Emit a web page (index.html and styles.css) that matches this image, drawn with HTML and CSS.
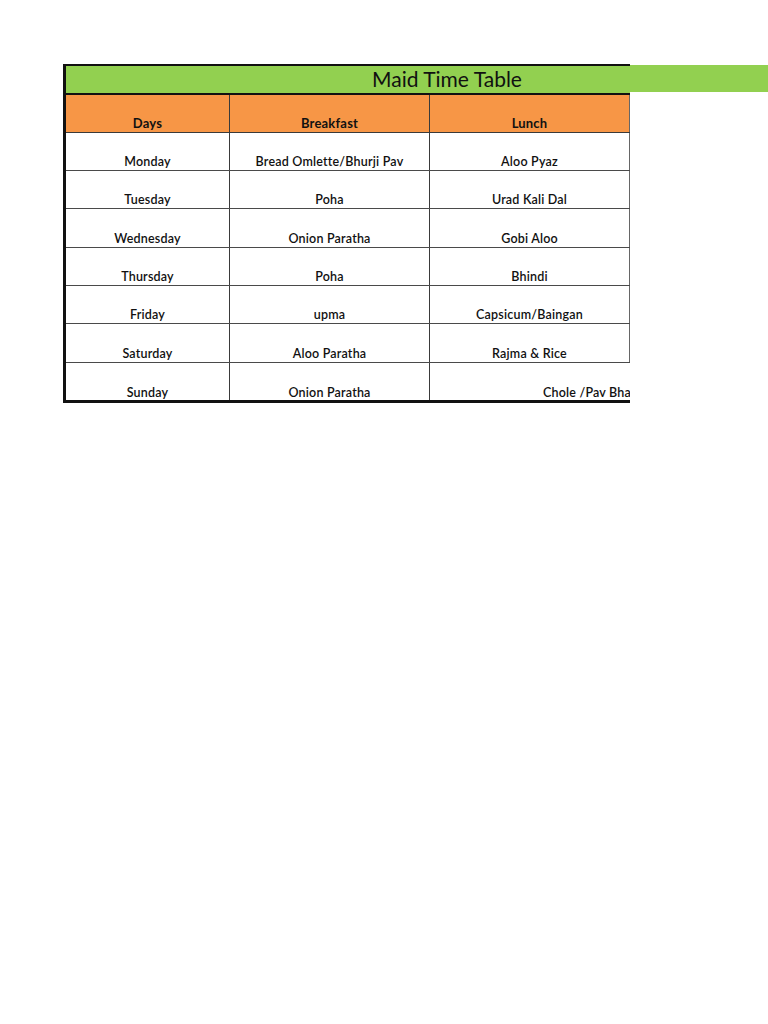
FILE: index.html
```html
<!DOCTYPE html>
<html>
<head>
<meta charset="utf-8">
<title>Maid Time Table</title>
<link rel="stylesheet" href="styles.css">
</head>
<body>
<div class="sheet">
  <div class="title-row">
    <div class="title-cell"><span class="title-text">Maid Time Table</span></div>
    <div class="title-ext"></div>
  </div>
  <div class="table">
    <div class="row head">
      <div class="cell">Days</div>
      <div class="cell">Breakfast</div>
      <div class="cell">Lunch</div>
    </div>
    <div class="row">
      <div class="cell">Monday</div>
      <div class="cell">Bread Omlette/Bhurji Pav</div>
      <div class="cell">Aloo Pyaz</div>
    </div>
    <div class="row">
      <div class="cell">Tuesday</div>
      <div class="cell">Poha</div>
      <div class="cell">Urad Kali Dal</div>
    </div>
    <div class="row tall">
      <div class="cell">Wednesday</div>
      <div class="cell">Onion Paratha</div>
      <div class="cell">Gobi Aloo</div>
    </div>
    <div class="row">
      <div class="cell">Thursday</div>
      <div class="cell">Poha</div>
      <div class="cell">Bhindi</div>
    </div>
    <div class="row">
      <div class="cell">Friday</div>
      <div class="cell">upma</div>
      <div class="cell">Capsicum/Baingan</div>
    </div>
    <div class="row tall">
      <div class="cell">Saturday</div>
      <div class="cell">Aloo Paratha</div>
      <div class="cell">Rajma &amp; Rice</div>
    </div>
    <div class="row last">
      <div class="cell">Sunday</div>
      <div class="cell">Onion Paratha</div>
      <div class="cell overflow">Chole /Pav Bhaji</div>
    </div>
  </div>
</div>
</body>
</html>
```

FILE: styles.css
```css
html, body {
  margin: 0;
  padding: 0;
  background: #ffffff;
}

body {
  font-family: Lato, "Open Sans", "Liberation Sans", sans-serif;
  color: #111;
  width: 768px;
  height: 1024px;
  overflow: hidden;
}

.sheet {
  padding-top: 64px;
}

.title-row {
  display: flex;
  align-items: flex-start;
}

.title-cell {
  margin-left: 63px;
  width: 366px;
  height: 27px;
  background: #92d050;
  border-top: 2px solid #111;
  border-left: 3px solid #111;
  border-bottom: 2px solid #111;
  display: flex;
  align-items: center;
  justify-content: center;
  padding-left: 198px;
}

.title-text {
  font-size: 21px;
  color: #111;
  white-space: nowrap;
  position: relative;
  top: -1px;
}

.title-ext {
  flex: 1;
  height: 27px;
  margin-top: 1px;
  background: #92d050;
}

.table {
  margin-left: 63px;
  width: 567px;
  border-left: 3px solid #111;
  border-bottom: 3px solid #111;
  box-sizing: border-box;
}

.row {
  display: grid;
  grid-template-columns: 164px 200px 200px;
  height: 38px;
  box-sizing: border-box;
  border-bottom: 1px solid #4a4a4a;
}

.row.tall {
  height: 39px;
}

.row.last {
  border-bottom: none;
  height: 37px;
}

.cell {
  display: flex;
  align-items: flex-end;
  justify-content: center;
  padding-bottom: 1px;
  font-size: 12.5px;
  font-weight: 600;
  letter-spacing: 0.2px;
  border-right: 1px solid #3a3a3a;
  white-space: nowrap;
  overflow: hidden;
  box-sizing: border-box;
}

.row.last .cell {
  padding-bottom: 0;
}

.cell:last-child {
  border-right: 1px solid #666;
}

.row.last .cell.overflow {
  border-right: none;
  justify-content: flex-start;
  padding-left: 113px;
}

.head {
  background: #f79646;
  border-bottom: 1px solid #3a3a3a;
}

.head .cell {
  font-weight: 700;
  font-size: 13px;
  letter-spacing: 0.2px;
  padding-bottom: 1px;
}
```
